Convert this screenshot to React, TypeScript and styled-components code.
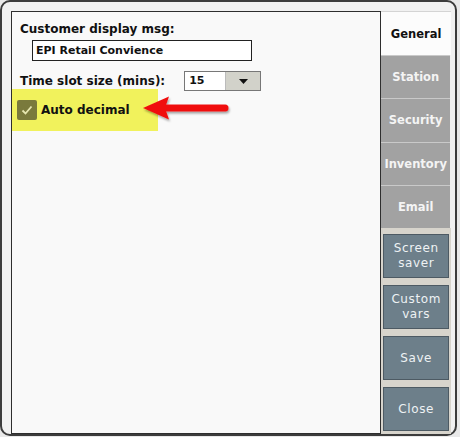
import React from 'react';
import styled, { createGlobalStyle } from 'styled-components';

const GlobalStyle = createGlobalStyle`
  html, body { margin: 0; padding: 0; background: #e9e9e9; }
  body { font-family: "DejaVu Sans", Verdana, sans-serif; }
`;

const tabs = ['General', 'Station', 'Security', 'Inventory', 'Email'];
const actions = [['Screen', 'saver'], ['Custom', 'vars'], ['Save'], ['Close']];

const App: React.FC = () => {
  return (
    <>
      <GlobalStyle />
      <Dialog>
        <Panel>
          <Label>Customer display msg:</Label>
          <TextBox>EPI Retail Convience</TextBox>
          <Row>
            <Label>Time slot size (mins):</Label>
            <Select>
              <SelectValue>15</SelectValue>
              <SelectButton>
                <svg width="9" height="5" viewBox="0 0 9 5">
                  <path d="M0 0h9L4.5 5z" fill="#111" />
                </svg>
              </SelectButton>
            </Select>
          </Row>
          <Highlight>
            <Check>
              <svg width="12" height="10" viewBox="0 0 12 10">
                <path d="M1.5 5.5l3 3 6-7" stroke="#e6e6b0" strokeWidth="1.8" fill="none" />
              </svg>
            </Check>
            <CheckLabel>Auto decimal</CheckLabel>
          </Highlight>
          <Arrow width="92" height="32" viewBox="0 0 92 32">
            <defs>
              <filter id="sh" x="-20%" y="-50%" width="140%" height="200%">
                <feDropShadow dx="1" dy="2" stdDeviation="1.2" floodColor="#000" floodOpacity="0.35" />
              </filter>
            </defs>
            <g filter="url(#sh)">
              <path d="M24 13 H83" stroke="#f01010" strokeWidth="7" strokeLinecap="round" />
              <path d="M1 13 L27 1.5 L23 13 L27 24.5 Z" fill="#f01010" />
            </g>
          </Arrow>
        </Panel>
        <Side>
          <Tabs>
            {tabs.map((t, i) => (
              <Tab key={t} $active={i === 0}>{t}</Tab>
            ))}
          </Tabs>
          <Actions>
            {actions.map((a) => (
              <Action key={a[0]}>
                {a.map((l) => <span key={l}>{l}</span>)}
              </Action>
            ))}
          </Actions>
        </Side>
      </Dialog>
    </>
  );
};

const Dialog = styled.div`
  width: 457px;
  height: 436px;
  box-sizing: border-box;
  border: 2px solid #3c3c3c;
  border-radius: 10px;
  background: #f1f1f1;
  padding: 9px 4px 0 9px;
  display: flex;
  align-items: flex-start;
`;

const Panel = styled.div`
  position: relative;
  width: 372px;
  height: 423px;
  box-sizing: border-box;
  border: 1px solid #2e2e2e;
  background: #f9f9f9;
  padding: 9px 0 0 8px;
  display: flex;
  flex-direction: column;
`;

const Label = styled.div`
  font-size: 12px;
  font-weight: bold;
  color: #111;
  line-height: 16px;
`;

const TextBox = styled.div`
  margin: 3px 0 0 12px;
  width: 220px;
  height: 21px;
  box-sizing: border-box;
  border: 1px solid #222;
  background: #fff;
  font-size: 11px;
  font-weight: bold;
  line-height: 19px;
  padding-left: 3px;
  color: #111;
`;

const Row = styled.div`
  display: flex;
  align-items: center;
  gap: 19px;
  margin-top: 10px;
`;

const Select = styled.div`
  display: flex;
  width: 77px;
  height: 20px;
  box-sizing: border-box;
  border: 1px solid #777;
  background: #fff;
`;

const SelectValue = styled.div`
  flex: 1;
  font-size: 11px;
  font-weight: bold;
  line-height: 18px;
  padding-left: 4px;
  color: #111;
`;

const SelectButton = styled.div`
  width: 34px;
  background: #d2d2ca;
  border-left: 1px solid #bbb;
  display: flex;
  align-items: center;
  justify-content: center;
`;

const Highlight = styled.div`
  margin: -2px 0 0 -8px;
  width: 146px;
  height: 42px;
  background: #f1f25c;
  display: flex;
  align-items: center;
  gap: 4px;
  padding-left: 5px;
  box-sizing: border-box;
`;

const Check = styled.div`
  width: 20px;
  height: 20px;
  border-radius: 2px;
  background: #7a7a3c;
  display: flex;
  align-items: center;
  justify-content: center;
`;

const CheckLabel = styled.span`
  font-size: 12px;
  font-weight: bold;
  color: #111;
`;

const Arrow = styled.svg`
  position: absolute;
  left: 130px;
  top: 83px;
`;

const Side = styled.div`
  width: 70px;
  height: 423px;
  display: flex;
  flex-direction: column;
  border-top: 1px solid #d4d4d4;
  box-sizing: border-box;
`;

const Tabs = styled.div`
  display: flex;
  flex-direction: column;
`;

const Tab = styled.div<{ $active?: boolean }>`
  height: ${(p) => (p.$active ? '43px' : '43.25px')};
  box-sizing: border-box;
  display: flex;
  align-items: center;
  justify-content: center;
  font-size: 11.5px;
  font-weight: bold;
  color: ${(p) => (p.$active ? '#111' : '#f4f4f4')};
  background: ${(p) => (p.$active ? '#fcfcfc' : '#a2a2a2')};
  border-top: ${(p) => (p.$active ? 'none' : '1px solid #c9c9c9')};
  margin-right: ${(p) => (p.$active ? '0' : '1px')};
`;

const Actions = styled.div`
  flex: 1;
  background: #d7d4cc;
  display: flex;
  flex-direction: column;
  gap: 7px;
  padding: 6px 2px 0 2px;
`;

const Action = styled.div`
  height: 44px;
  box-sizing: border-box;
  background: #6d7f8a;
  border: 1px solid #4d5a63;
  display: flex;
  flex-direction: column;
  align-items: center;
  justify-content: center;
  color: #eef2f4;
  font-size: 12px;
  letter-spacing: 0.6px;
  line-height: 15px;
`;

export default App;
